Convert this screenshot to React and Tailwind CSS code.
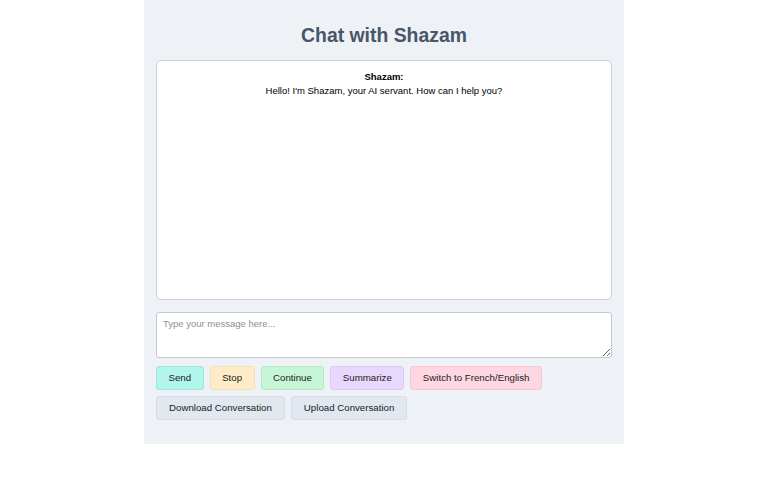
export default function App() {
  const btn = "h-[24px] px-[11.5px] rounded-[3px] border text-[9.7px] leading-none text-[#1a1a1a] flex items-center";
  return (
    <div className="w-full min-h-[480px] bg-white flex justify-center" style={{ fontFamily: '"Liberation Sans", Arial, sans-serif' }}>
      <div className="w-[480px] h-[444px] bg-[#eef2f7] px-[12px] pt-[22px]">
        <h1 className="text-center text-[19.4px] leading-[26px] font-bold text-[#4a5568] mb-[12px]">Chat with Shazam</h1>
        <div className="h-[240px] bg-white border border-[#c8ced6] rounded-[5px] pt-[9px] px-[10px] text-center text-[9.5px] leading-[14px] text-black">
          <div className="font-bold">Shazam:</div>
          <div>Hello! I'm Shazam, your AI servant. How can I help you?</div>
        </div>
        <textarea
          className="mt-[12px] block w-full h-[46px] bg-white border border-[#c4c8d0] rounded-[3px] px-[6px] py-[5px] text-[9.5px] leading-[12px] placeholder:text-[#8a8f98] resize-y"
          placeholder="Type your message here..."
        />
        <div className="mt-[8px] flex gap-[6px]">
          <button className={btn + " bg-[#b2f5ea] border-[#9ee6da]"}>Send</button>
          <button className={btn + " bg-[#feebc8] border-[#f5dfb6]"}>Stop</button>
          <button className={btn + " bg-[#c6f6d5] border-[#b3e9c4]"}>Continue</button>
          <button className={btn + " bg-[#e9d8fd] border-[#dcc8f5]"}>Summarize</button>
          <button className={btn + " bg-[#fed7e2] border-[#f5c7d4]"}>Switch to French/English</button>
        </div>
        <div className="mt-[6px] flex gap-[6px]">
          <button className={btn + " px-[12px] bg-[#e2e8f0] border-[#d7dde6]"}>Download Conversation</button>
          <button className={btn + " px-[12px] bg-[#e2e8f0] border-[#d7dde6]"}>Upload Conversation</button>
        </div>
      </div>
    </div>
  );
}
